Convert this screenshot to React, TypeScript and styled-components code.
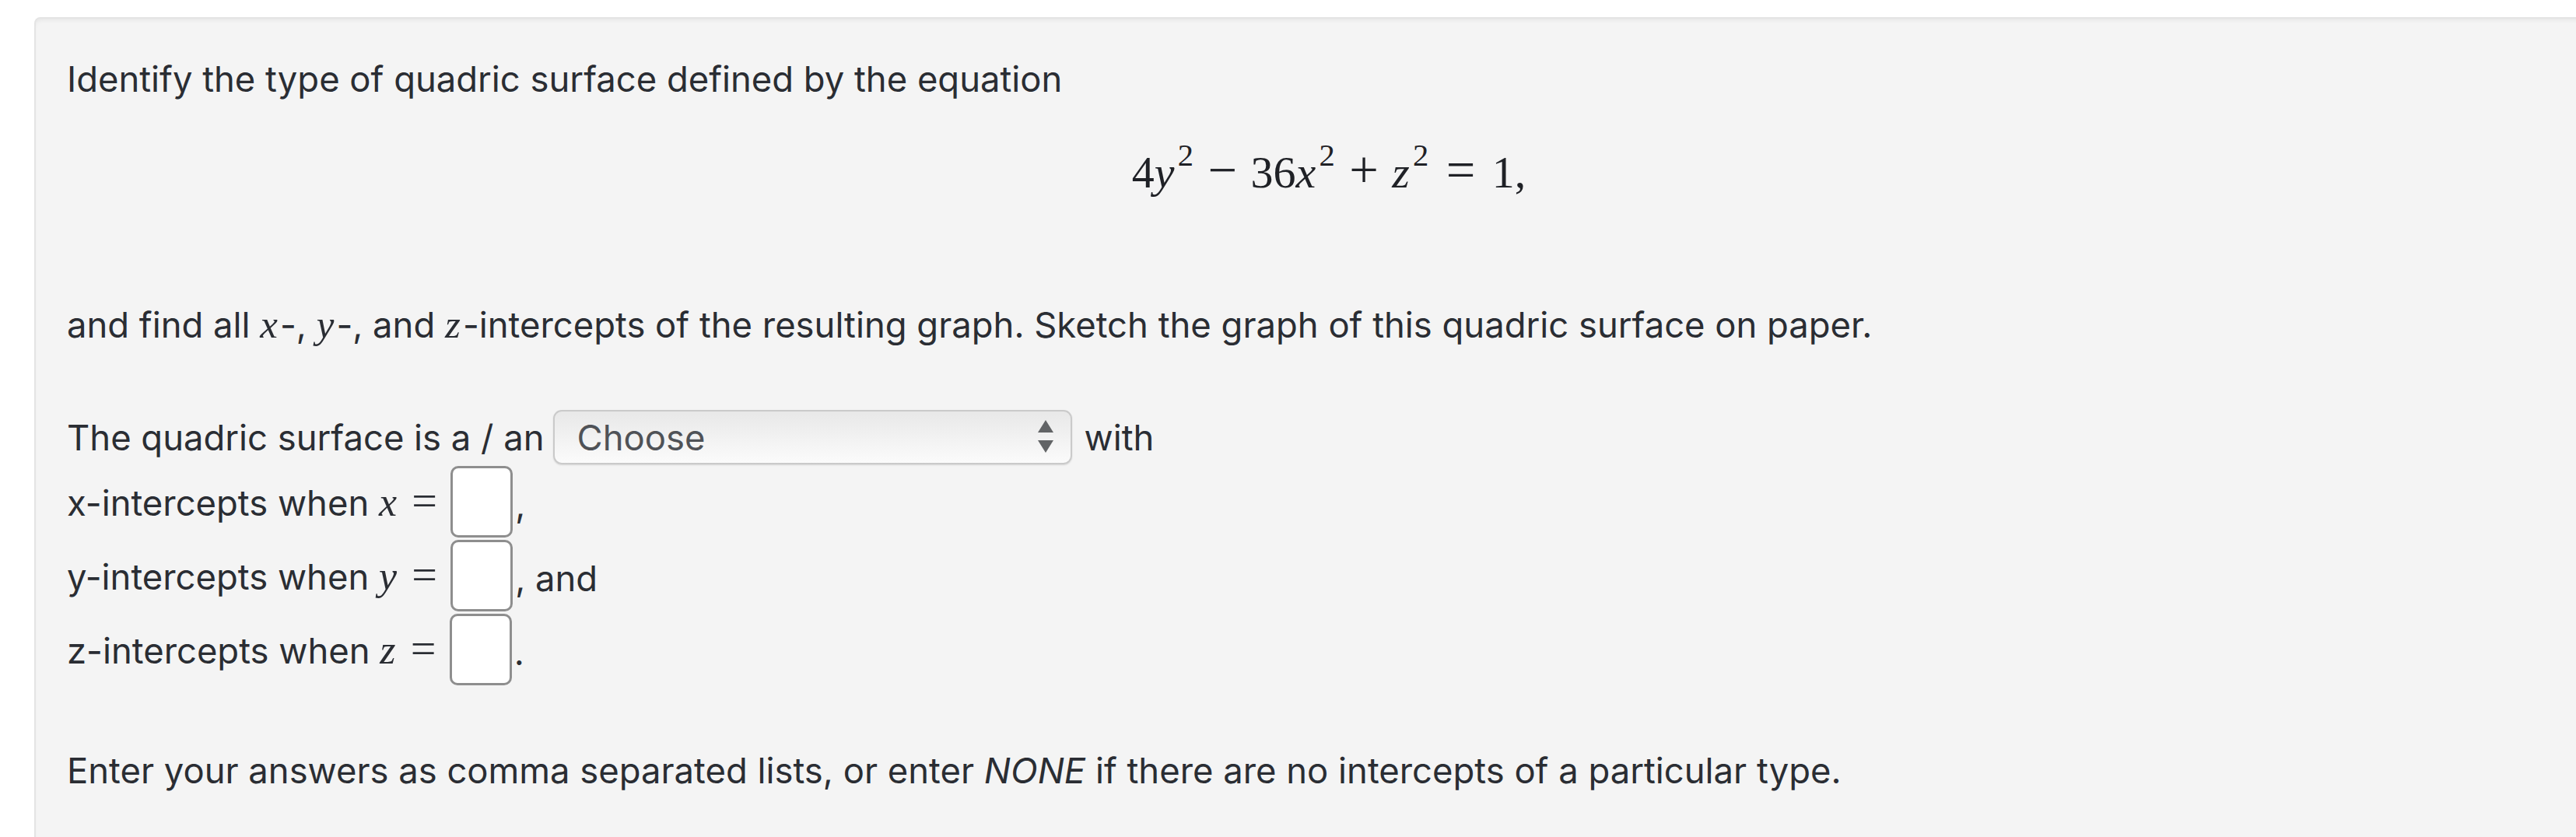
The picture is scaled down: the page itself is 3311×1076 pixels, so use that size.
import React from "react";
import styled, { createGlobalStyle } from "styled-components";

const GlobalStyle = createGlobalStyle`
  html, body {
    margin: 0;
    padding: 0;
    background: #ffffff;
    overflow: hidden;
  }
`;

const Panel = styled.div`
  box-sizing: border-box;
  margin: 22px 0 0 44px;
  width: 3300px;
  min-height: 1100px;
  background: #f4f4f4;
  border: 2px solid #e4e4e4;
  border-right: none;
  border-bottom: none;
  border-radius: 8px 0 0 0;
  box-shadow: inset 0 4px 6px -3px rgba(0, 0, 0, 0.08);
  padding: 45px 14px 60px 40px;
  font-family: Inter, "Liberation Sans", Arial, sans-serif;
  font-size: 45.4px;
  color: #2a2d33;
`;

const Para = styled.p<{ $mt?: number }>`
  margin: ${(p) => p.$mt ?? 0}px 0 0 0;
  line-height: 66px;
  white-space: nowrap;
`;

const DisplayMath = styled.div<{ $mt?: number }>`
  margin-top: ${(p) => p.$mt ?? 0}px;
  text-align: center;
  font-family: "Liberation Serif", "Times New Roman", serif;
  font-size: 58px;
  line-height: 80px;
  color: #1f2126;
  white-space: nowrap;
`;

const MI = styled.span<{ $size?: number }>`
  font-family: "Liberation Serif", "Times New Roman", serif;
  font-style: italic;
  font-size: ${(p) => (p.$size ? `${p.$size}px` : "inherit")};
  padding-right: 0.06em;
`;

const MN = styled.span`
  font-family: "Liberation Serif", "Times New Roman", serif;
`;

const Sup = styled.span`
  font-size: 0.7em;
  vertical-align: 0.7em;
  line-height: 0;
  margin-left: 0.02em;
`;

const Op = styled.span<{ $l: number; $r: number }>`
  display: inline-block;
  font-family: "Liberation Serif", "Times New Roman", serif;
  font-style: normal;
  font-size: 1.15em;
  width: 0.68em;
  text-align: center;
  margin: 0 ${(p) => p.$r}em 0 ${(p) => p.$l}em;
  line-height: 1;
`;

const RowOp = styled.span`
  display: inline-block;
  font-family: "Liberation Serif", "Times New Roman", serif;
  font-size: 58px;
  width: 37px;
  text-align: center;
  margin: 0 15px 0 14px;
  line-height: 1;
`;

const ChoiceRow = styled.div<{ $mt?: number }>`
  margin-top: ${(p) => p.$mt ?? 0}px;
  display: flex;
  align-items: baseline;
  white-space: nowrap;
`;

const SelectWrap = styled.span`
  position: relative;
  display: inline-flex;
  margin: 0 16px 0 11px;
`;

const Select = styled.select`
  appearance: none;
  -webkit-appearance: none;
  box-sizing: border-box;
  width: 667px;
  height: 70px;
  padding: 0 60px 0 29px;
  border: 2px solid #cacaca;
  border-radius: 11px;
  background: linear-gradient(#e8e8e8, #fbfbfb);
  box-shadow: 0 1px 2px rgba(0, 0, 0, 0.12);
  font-family: Inter, "Liberation Sans", Arial, sans-serif;
  font-size: 45.4px;
  color: #4f5257;
  outline: none;
`;

const Arrows = styled.svg`
  position: absolute;
  right: 24px;
  top: 13px;
  width: 20px;
  height: 42px;
  pointer-events: none;
`;

const AnswerRow = styled.div`
  height: 95px;
  display: flex;
  align-items: center;
  white-space: nowrap;
  line-height: 66px;
`;

const RowLabel = styled.span`
  display: inline-flex;
  align-items: baseline;
  padding-top: 4px;
`;

const AnswerBox = styled.input`
  box-sizing: border-box;
  width: 80px;
  height: 92px;
  margin: 0;
  border: 3px solid #8e8e8e;
  border-radius: 10px;
  background: #ffffff;
  font-size: 40px;
  padding: 0 8px;
  outline: none;
`;

const Trail = styled.span`
  align-self: center;
  padding-top: 8px;
  margin-left: 3px;
`;

const Em = styled.em`
  font-style: italic;
`;

function Arrow() {
  return (
    <Arrows viewBox="0 0 20 42">
      <path d="M10 0 L20 16 L0 16 Z" fill="#626466" />
      <path d="M10 42 L20 26 L0 26 Z" fill="#626466" />
    </Arrows>
  );
}

const rows: { v: string; after: string }[] = [
  { v: "x", after: "," },
  { v: "y", after: ", and" },
  { v: "z", after: "." },
];

export default function App() {
  return (
    <>
      <GlobalStyle />
      <Panel>
        <Para>Identify the type of quadric surface defined by the equation</Para>
        <DisplayMath $mt={47}>
          <MN>4</MN>
          <MI>y</MI>
          <Sup>
            <MN>2</MN>
          </Sup>
          <Op $l={0.22} $r={0.2}>−</Op>
          <MN>36</MN>
          <MI>x</MI>
          <Sup>
            <MN>2</MN>
          </Sup>
          <Op $l={0.22} $r={0.2}>+</Op>
          <MI>z</MI>
          <Sup>
            <MN>2</MN>
          </Sup>
          <Op $l={0.28} $r={0.26}>=</Op>
          <MN>1,</MN>
        </DisplayMath>
        <Para $mt={122}>
          and find all <MI $size={51}>x</MI>-, <MI $size={51}>y</MI>-, and{" "}
          <MI $size={51}>z</MI>-intercepts of the resulting graph. Sketch the graph of this
          quadric surface on paper.
        </Para>
        <ChoiceRow $mt={76}>
          <span>The quadric surface is a / an</span>
          <SelectWrap>
            <Select defaultValue="">
              <option value="">Choose</option>
              <option value="ellipsoid">ellipsoid</option>
              <option value="hyperboloid1">hyperboloid of one sheet</option>
              <option value="hyperboloid2">hyperboloid of two sheets</option>
              <option value="cone">elliptic cone</option>
              <option value="paraboloid">elliptic paraboloid</option>
              <option value="hyperbolic">hyperbolic paraboloid</option>
            </Select>
            <Arrow />
          </SelectWrap>
          <span>with</span>
        </ChoiceRow>
        {rows.map((r) => (
          <AnswerRow key={r.v}>
            <RowLabel>
              {r.v}-intercepts when&nbsp;
              <MI $size={52}>{r.v}</MI>
              <RowOp>=</RowOp>
            </RowLabel>
            <AnswerBox type="text" aria-label={`${r.v}-intercepts`} />
            <Trail>{r.after}</Trail>
          </AnswerRow>
        ))}
        <Para $mt={76}>
          Enter your answers as comma separated lists, or enter <Em>NONE</Em> if there are no
          intercepts of a particular type.
        </Para>
      </Panel>
    </>
  );
}
